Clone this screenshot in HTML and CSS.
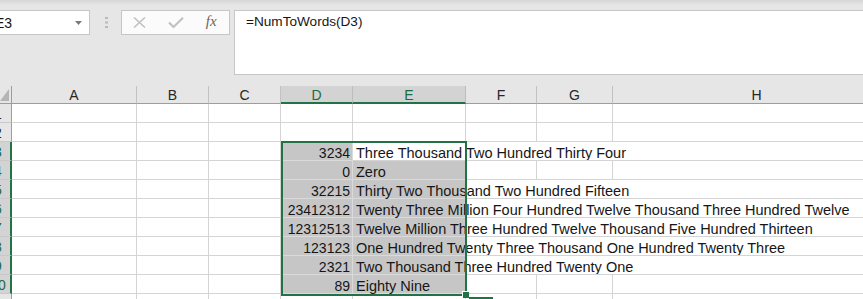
FILE: index.html
```html
<!DOCTYPE html>
<html>

<head>
    <title>NumToWords</title>
    <meta charset="UTF-8">
    <link rel="stylesheet" href="styles.css">
</head>

<body>
    <div class="ribbon">
        <div class="namebox">
            <span>E3</span>
            <svg width="7" height="4" viewBox="0 0 7 4"><path d="M0 0h7L3.5 4z" fill="#7a7a7a"/></svg>
        </div>
        <div class="grip">
            <svg width="3" height="11" viewBox="0 0 3 11"><rect x="0" y="0" width="3" height="2" fill="#b9b9b9"/><rect x="0" y="4.5" width="3" height="2" fill="#b9b9b9"/><rect x="0" y="9" width="3" height="2" fill="#b9b9b9"/></svg>
        </div>
        <div class="fbtns">
            <span class="fbtn"><svg width="13" height="11" viewBox="0 0 13 11"><path d="M1 0.5l11 10M12 0.5l-11 10" stroke="#c2c2c2" stroke-width="1.6" fill="none"/></svg></span>
            <span class="fbtn"><svg width="16" height="11" viewBox="0 0 16 11"><path d="M1 5.5l4.5 4.5L15 0.8" stroke="#c2c2c2" stroke-width="2.2" fill="none"/></svg></span>
            <span class="fbtn fx">fx</span>
        </div>
        <div class="formula">=NumToWords(D3)</div>
    </div>

    <div class="sheet">
        <!-- header -->
        <div class="corner"><span class="tri"></span></div>
        <div class="hd">A</div>
        <div class="hd">B</div>
        <div class="hd">C</div>
        <div class="hd on">D</div>
        <div class="hd on">E</div>
        <div class="hd">F</div>
        <div class="hd">G</div>
        <div class="hd">H</div>

        <!-- row 1 -->
        <div class="rh"><span>1</span></div>
        <div class="c"></div><div class="c"></div><div class="c"></div><div class="c"></div><div class="c"></div><div class="c"></div><div class="c"></div><div class="c"></div>
        <!-- row 2 -->
        <div class="rh"><span>2</span></div>
        <div class="c"></div><div class="c"></div><div class="c"></div><div class="c"></div><div class="c"></div><div class="c"></div><div class="c"></div><div class="c"></div>
        <!-- row 3 -->
        <div class="rh on"><span>3</span></div>
        <div class="c"></div><div class="c"></div><div class="c"></div>
        <div class="c s num">3234</div>
        <div class="c act txt">Three Thousand Two Hundred Thirty Four</div>
        <div class="c ov"></div><div class="c ov"></div><div class="c"></div>
        <!-- row 4 -->
        <div class="rh on"><span>4</span></div>
        <div class="c"></div><div class="c"></div><div class="c"></div>
        <div class="c s num">0</div>
        <div class="c s txt">Zero</div>
        <div class="c"></div><div class="c"></div><div class="c"></div>
        <!-- row 5 -->
        <div class="rh on"><span>5</span></div>
        <div class="c"></div><div class="c"></div><div class="c"></div>
        <div class="c s num">32215</div>
        <div class="c s txt">Thirty Two Thousand Two Hundred Fifteen</div>
        <div class="c ov"></div><div class="c ov"></div><div class="c"></div>
        <!-- row 6 -->
        <div class="rh on"><span>6</span></div>
        <div class="c"></div><div class="c"></div><div class="c"></div>
        <div class="c s num">23412312</div>
        <div class="c s txt">Twenty Three Million Four Hundred Twelve Thousand Three Hundred Twelve</div>
        <div class="c ov"></div><div class="c ov"></div><div class="c"></div>
        <!-- row 7 -->
        <div class="rh on"><span>7</span></div>
        <div class="c"></div><div class="c"></div><div class="c"></div>
        <div class="c s num">12312513</div>
        <div class="c s txt">Twelve Million Three Hundred Twelve Thousand Five Hundred Thirteen</div>
        <div class="c ov"></div><div class="c ov"></div><div class="c"></div>
        <!-- row 8 -->
        <div class="rh on"><span>8</span></div>
        <div class="c"></div><div class="c"></div><div class="c"></div>
        <div class="c s num">123123</div>
        <div class="c s txt">One Hundred Twenty Three Thousand One Hundred Twenty Three</div>
        <div class="c ov"></div><div class="c ov"></div><div class="c"></div>
        <!-- row 9 -->
        <div class="rh on"><span>9</span></div>
        <div class="c"></div><div class="c"></div><div class="c"></div>
        <div class="c s num">2321</div>
        <div class="c s txt">Two Thousand Three Hundred Twenty One</div>
        <div class="c ov"></div><div class="c ov"></div><div class="c"></div>
        <!-- row 10 -->
        <div class="rh on"><span>10</span></div>
        <div class="c"></div><div class="c"></div><div class="c"></div>
        <div class="c s num">89</div>
        <div class="c s txt">Eighty Nine</div>
        <div class="c"></div><div class="c"></div><div class="c"></div>
        <!-- row 11 -->
        <div class="rh"><span>11</span></div>
        <div class="c"></div><div class="c"></div><div class="c"></div><div class="c"></div><div class="c"></div><div class="c"></div><div class="c"></div><div class="c"></div>

        <!-- selection frame -->
        <div class="selbox"></div>
        <div class="handle"></div>
        <div class="qa"></div>
    </div>
</body>

</html>
```

FILE: styles.css
```css
body {
    margin: 0;
    background-color: #e6e6e6;
    font-family: "Liberation Sans", Arial, sans-serif;
    font-size: 14px;
    color: #161616;
    overflow: hidden;
}

/* Formula bar */
.ribbon {
    height: 86px;
    box-sizing: border-box;
    padding-top: 10px;
    display: flex;
    align-items: flex-start;
    background: linear-gradient(#d6d6d6 0, #e6e6e6 5px);
}

.namebox {
    width: 100px;
    height: 25px;
    margin-left: -10px;
    box-sizing: border-box;
    border: 1px solid #c6c6c6;
    background-color: #fff;
    display: flex;
    align-items: center;
    justify-content: space-between;
    padding: 0 7px 0 4px;
}

.grip {
    width: 5px;
    height: 25px;
    margin-left: 14px;
    display: flex;
    align-items: center;
    justify-content: center;
}

.fbtns {
    width: 109px;
    height: 25px;
    margin-left: 12px;
    box-sizing: border-box;
    border: 1px solid #c6c6c6;
    background-color: #fbfbfb;
    display: flex;
    align-items: center;
}

.fbtn {
    width: 36px;
    display: flex;
    justify-content: center;
    align-items: center;
}

.fx {
    font-family: "Liberation Serif", serif;
    font-style: italic;
    font-size: 15px;
    color: #666;
    margin-top: -2px;
}

.formula {
    flex: 1;
    height: 65px;
    margin-left: 4px;
    margin-right: -2px;
    box-sizing: border-box;
    border: 1px solid #c6c6c6;
    background-color: #fff;
    padding: 3px 11px;
    line-height: 16px;
    font-size: 13.6px;
}

/* Grid */
.sheet {
    position: relative;
    display: grid;
    grid-template-columns: 12px 125px 72px 72px 72px 113px 71px 76px 288px;
    grid-template-rows: 18px repeat(11, 19px);
    background-color: #fff;
}

.corner {
    background-color: #e6e6e6;
    border-right: 1px solid #9d9d9d;
    border-bottom: 1px solid #9d9d9d;
    position: relative;
}

.tri {
    position: absolute;
    left: 0;
    bottom: 2px;
    width: 9px;
    height: 12px;
    background-color: #b5b5b5;
    clip-path: polygon(100% 0, 100% 100%, 0 100%);
}

.hd {
    background-color: #e6e6e6;
    border-right: 1px solid #c2c2c2;
    border-bottom: 1px solid #9d9d9d;
    text-align: center;
    line-height: 18px;
    color: #262626;
    box-sizing: border-box;
}

.hd.on {
    background-color: #d3d3d3;
    border-bottom: 2px solid #217346;
    color: #1e6a3f;
    border-right-color: #bdbdbd;
}

.rh {
    background-color: #e6e6e6;
    border-right: 1px solid #9d9d9d;
    border-bottom: 1px solid #c8c8c8;
    overflow: hidden;
    box-sizing: border-box;
    padding-top: 2px;
    line-height: 17px;
    color: #262626;
}

.rh span {
    display: block;
    width: 26px;
    margin-left: -15px;
    text-align: center;
}

.rh.on {
    background-color: #d3d3d3;
    border-right: 2px solid #217346;
    color: #1e6a3f;
}

.c {
    border-right: 1px solid #d4d4d4;
    border-bottom: 1px solid #d4d4d4;
    box-sizing: border-box;
    padding-top: 3px;
    line-height: 16px;
    white-space: nowrap;
}

.c.s {
    background-color: #c6c6c6;
    border-color: #dadada;
}

.c.act {
    background-color: #fff;
}

.num {
    text-align: right;
    padding-right: 2px;
}

.txt {
    padding-left: 3px;
    font-size: 14.5px;
    overflow: visible;
}

.c.ov {
    border-right: none;
}

/* Selection frame over the grid */
.selbox {
    position: absolute;
    left: 281px;
    top: 55px;
    width: 186px;
    height: 155px;
    box-sizing: border-box;
    border: 2px solid #217346;
    pointer-events: none;
}

.handle {
    position: absolute;
    left: 463px;
    top: 206px;
    width: 6px;
    height: 6px;
    background-color: #217346;
    box-shadow: -1px -1px 0 #fff;
}

.qa {
    position: absolute;
    left: 469px;
    top: 211px;
    width: 24px;
    height: 2px;
    background-color: #217346;
}
```
